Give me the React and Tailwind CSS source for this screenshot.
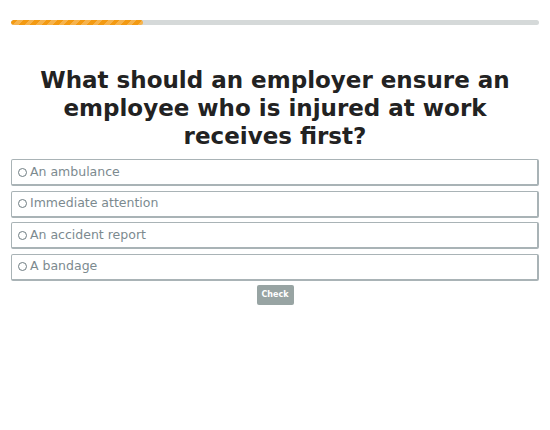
import React from "react";

const options = ["An ambulance", "Immediate attention", "An accident report", "A bandage"];

export default function App() {
  return (
    <div className="w-[550px] h-[430px] bg-white" style={{ fontFamily: "'DejaVu Sans', sans-serif" }}>
      <div className="px-[11px] pt-[20px]">
        <div className="h-[5px] w-full rounded-full bg-[#d5d9d9] overflow-hidden">
          <div
            className="h-full w-[132px] rounded-full bg-[#f39a12]"
            style={{
              backgroundImage:
                "repeating-linear-gradient(-45deg, rgba(255,255,255,0.25) 0 4px, transparent 4px 8px)",
            }}
          />
        </div>
      </div>
      <h1 className="mt-[41px] px-4 text-center text-[23px] leading-[28px] font-bold text-[#222]">
        What should an employer ensure an employee who is injured at work receives first?
      </h1>
      <div className="mt-[9px] flex flex-col gap-[4.5px] px-[11px]">
        {options.map((o) => (
          <div
            key={o}
            className="h-[27px] flex items-center gap-[3px] rounded-[2px] border border-[#a9b3b6] border-b-2 border-r-2 bg-white px-[6px] text-[12.5px] text-[#7c8a8f]"
          >
            <span className="inline-block w-[9px] h-[9px] rounded-full border-[1.5px] border-[#6f7d82]" />
            <span>{o}</span>
          </div>
        ))}
      </div>
      <div className="mt-[4px] flex justify-center">
        <button className="h-[20px] w-[37px] rounded-[2px] bg-[#98a4a3] text-[8px] font-bold text-white">
          Check
        </button>
      </div>
    </div>
  );
}
